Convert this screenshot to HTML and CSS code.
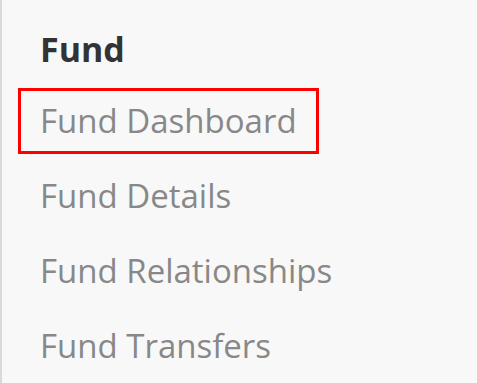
FILE: index.html
```html
<!DOCTYPE html>
<html lang="en">
<head>
    <meta charset="UTF-8">
    <meta name="viewport" content="width=device-width, initial-scale=1.0">
    <title>Fund</title>
    <link rel="stylesheet" href="styles.css">
</head>
<body>
    <div class="sidebar">
        <h2>Fund</h2>
        <ul class="nav-list">
            <li><a class="active" href="#">Fund Dashboard</a></li>
            <li><a href="#">Fund Details</a></li>
            <li><a href="#">Fund Relationships</a></li>
            <li><a href="#">Fund Transfers</a></li>
        </ul>
    </div>
</body>
</html>
```

FILE: styles.css
```css
html, body {
    margin: 0;
    padding: 0;
    height: 100%;
}
body {
    font-family: "Open Sans", Arial, sans-serif;
    background-color: #f8f8f8;
}
.sidebar {
    height: 100%;
    box-sizing: border-box;
    border-left: 2px solid #d9d9d9;
    padding-left: 16px;
}
.sidebar h2 {
    margin: 0;
    padding: 29px 0 19px 22px;
    font-size: 34px;
    line-height: 40px;
    font-weight: 700;
    color: #333333;
}
.nav-list {
    list-style: none;
    margin: 0;
    padding: 0;
}
.nav-list li {
    margin-bottom: 9px;
}
.nav-list a {
    display: inline-block;
    box-sizing: border-box;
    min-width: 299px;
    padding: 0 19px;
    border: 3px solid transparent;
    line-height: 60px;
    font-size: 33px;
    color: #888888;
    text-decoration: none;
}
.nav-list a.active {
    border-color: #ff0000;
}
```
